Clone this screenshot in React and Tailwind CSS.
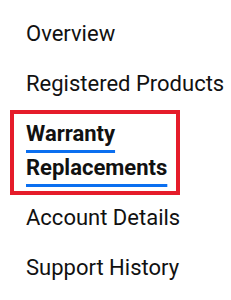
import React from 'react';

const items = [
  { label: 'Overview' },
  { label: 'Registered Products' },
  { label: 'Warranty Replacements', active: true },
  { label: 'Account Details' },
  { label: 'Support History' },
];

export default function App() {
  return (
    <div className="relative min-h-screen bg-white font-['Roboto',sans-serif] text-[#111]">
      <ul className="flex flex-col gap-4 pl-[26px] pt-[17px]">
        {items.map((item) => (
          <li key={item.label} className="relative text-[22px] leading-[34px]">
            {item.active ? (
              <>
                <div className="absolute -left-4 -top-[7px] -bottom-[10px] w-[170px] border-4 border-[#e51c2a]" />
                <a
                  href="#"
                  className="block w-[160px] font-bold underline decoration-[#0b6ff0] decoration-[3px] underline-offset-[9px] [text-decoration-skip-ink:none]"
                >
                  {item.label}
                </a>
              </>
            ) : (
              <a href="#" className="whitespace-nowrap">{item.label}</a>
            )}
          </li>
        ))}
      </ul>
    </div>
  );
}
